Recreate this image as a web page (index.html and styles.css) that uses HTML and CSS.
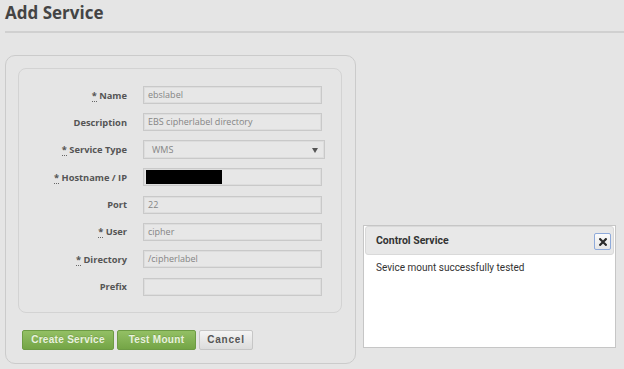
FILE: index.html
```html
<!DOCTYPE html>
<html>
<head>
<meta charset="utf-8">
<link rel="stylesheet" href="styles.css">
</head>
<body>
<div class="page">
  <h1 class="title">Add Service</h1>
  <div class="main">
    <div class="form-panel">
      <div class="fields">
        <label class="lbl"><abbr class="req" title="required">*</abbr> Name</label>
        <div class="field">ebslabel</div>
        <label class="lbl">Description</label>
        <div class="field">EBS cipherlabel directory</div>
        <label class="lbl"><abbr class="req" title="required">*</abbr> Service Type</label>
        <div class="field select"><span>WMS</span><span class="arrow"></span></div>
        <label class="lbl"><abbr class="req" title="required">*</abbr> Hostname / IP</label>
        <div class="field redacted"><span class="blackout"></span></div>
        <label class="lbl">Port</label>
        <div class="field">22</div>
        <label class="lbl"><abbr class="req" title="required">*</abbr> User</label>
        <div class="field">cipher</div>
        <label class="lbl"><abbr class="req" title="required">*</abbr> Directory</label>
        <div class="field">/cipherlabel</div>
        <label class="lbl">Prefix</label>
        <div class="field"></div>
      </div>
      <div class="actions">
        <button class="btn btn-green btn-create">Create Service</button>
        <button class="btn btn-green btn-test">Test Mount</button>
        <button class="btn btn-plain">Cancel</button>
      </div>
    </div>
    <div class="dialog">
      <div class="dialog-head">
        <span class="dialog-title">Control Service</span>
        <span class="close"><svg width="8" height="8" viewBox="0 0 8 8"><path d="M1.2 1.2 L6.8 6.8 M6.8 1.2 L1.2 6.8" stroke="#2b2b2b" stroke-width="2.2" stroke-linecap="square"/></svg></span>
      </div>
      <div class="dialog-body">Sevice mount successfully tested</div>
    </div>
  </div>
</div>
</body>
</html>
```
FILE: styles.css
```css
* { box-sizing: border-box; }
html, body { margin: 0; padding: 0; background: #e5e5e5; }
body { font-family: "Open Sans", "Liberation Sans", sans-serif; height: 369px; overflow: hidden; }
.page { padding-left: 5px; }
.title {
  margin: 0;
  padding: 1px 0 7px 0;
  font-size: 17px;
  line-height: 23px;
  font-weight: 700;
  color: #444;
  border-bottom: 2px solid #d0d0d0;
}
.main { display: flex; align-items: flex-start; }
.form-panel {
  margin-top: 22px;
  width: 351px;
  height: 309px;
  border: 1px solid #cbcbcb;
  border-radius: 10px;
  padding: 12px 13px 0 12px;
}
.fields {
  border: 1px solid #d3d3d3;
  border-radius: 8px;
  padding: 17px 19px 16px 0;
  display: grid;
  grid-template-columns: 108px 179px;
  column-gap: 16px;
  grid-auto-rows: 18px;
  row-gap: 9.4px;
  align-items: center;
}
.lbl {
  text-align: right;
  font-size: 9.3px;
  font-weight: 700;
  color: #555;
  white-space: nowrap;
}
.req {
  text-decoration: none;
  border-bottom: 1px dotted #666;
  font-weight: 700;
  line-height: 10px;
  display: inline-block;
}
.field {
  height: 18px;
  border: 1px solid #c9c9c9;
  box-shadow: inset 0 0 0 1px #dddddd;
  background: #e7e7e7;
  font-size: 9px;
  line-height: 16px;
  color: #858585;
  padding: 0 4px;
  white-space: nowrap;
}
.select {
  width: 182px;
  height: 19px;
  line-height: 17px;
  padding: 0 6px 0 8px;
  display: flex;
  justify-content: space-between;
  align-items: center;
}
.arrow {
  width: 0; height: 0;
  border-left: 3px solid transparent;
  border-right: 3px solid transparent;
  border-top: 5px solid #555;
  margin-top: 1px;
}
.redacted { padding: 1px 2px; }
.blackout { display: block; width: 76px; height: 14px; background: #000; }
.actions {
  display: flex;
  gap: 3px;
  margin-top: 17px;
  padding-left: 4px;
}
.btn {
  height: 20px;
  padding: 0;
  font-family: "Liberation Sans", Arial, sans-serif;
  font-size: 10px;
  font-weight: 700;
  letter-spacing: 0.3px;
  border-radius: 2px;
  cursor: pointer;
}
.btn-green {
  color: #e9f2df;
  background: linear-gradient(#93c064, #74a546);
  border: 1px solid #6d9b44;
  text-shadow: 0 -1px 0 rgba(0,0,0,0.12);
}
.btn-create { width: 92px; }
.btn-test { width: 79px; }
.btn-plain {
  width: 54px;
  color: #555;
  background: linear-gradient(#f4f4f4, #dcdcdc);
  border: 1px solid #c6c6c6;
  letter-spacing: 0.8px;
}
.dialog {
  margin-top: 192px;
  margin-left: 7px;
  width: 253px;
  height: 123px;
  background: #fff;
  border: 1px solid #c6c6c6;
  padding: 0 1px;
  font-family: Roboto, "Liberation Sans", sans-serif;
}
.dialog-head {
  height: 29px;
  background: #e8e8e8;
  border: 1px solid #d9d9d9;
  border-radius: 3px;
  display: flex;
  align-items: center;
  justify-content: space-between;
  padding: 0 2px 0 10px;
}
.dialog-title { font-size: 10.5px; font-weight: 700; color: #333; }
.close {
  width: 17px; height: 17px;
  border: 1px solid #8eaadb;
  border-radius: 2px;
  background: linear-gradient(#fbfbfb, #e6e6e6);
  display: flex;
  align-items: center;
  justify-content: center;
  margin-top: 2px;
}
.dialog-body {
  padding: 6px 0 0 11px;
  font-size: 10px;
  line-height: 13px;
  color: #333;
}
```
